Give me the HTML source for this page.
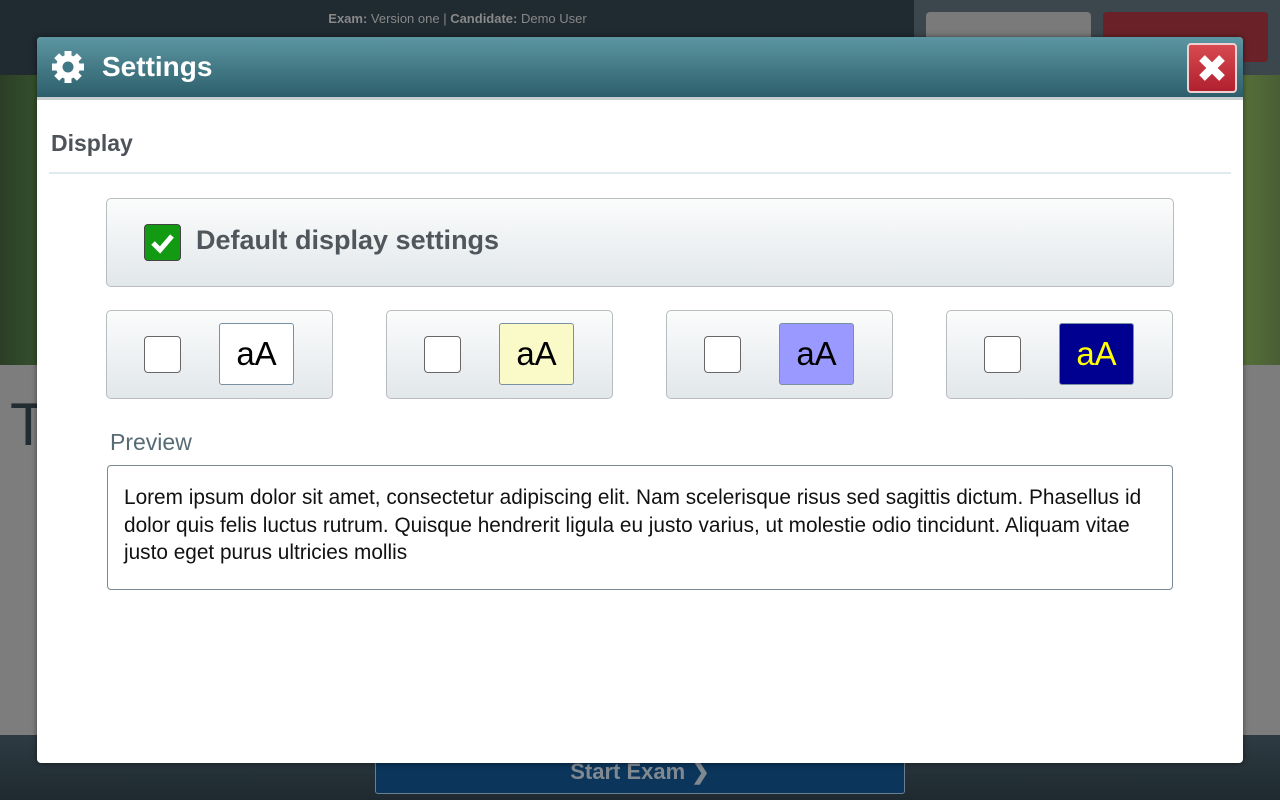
<!DOCTYPE html>
<html><head><meta charset="utf-8"><style>
*{box-sizing:border-box;margin:0;padding:0}
body{width:1280px;height:800px;overflow:hidden;position:relative;font-family:"Liberation Sans",sans-serif;background:#7d7d7d}
.top{position:absolute;left:0;top:0;width:1280px;height:75px;background:#1f2a31}
.top .r{position:absolute;left:914px;top:0;width:366px;height:75px;background:#3b464d}
.img{position:absolute;left:0;top:75px;width:1280px;height:290px;background:linear-gradient(90deg,#2c3e26,#34502c 3%,#5a6a55 6%,#707870 12%,#7a7f78 90%,#56703a 97%,#4a5e34)}
.bot{position:absolute;left:0;top:735px;width:1280px;height:65px;background:linear-gradient(#2e3b42,#1e2a30)}
.startbtn{position:absolute;left:375px;top:740px;width:530px;height:54px;background:#0b355a;border:1px solid #6a8090;border-radius:3px;color:#808890;font-weight:bold;font-size:22px;text-align:center;padding-top:18px}
.hdrtxt{position:absolute;left:0;width:915px;top:11px;text-align:center;color:#888;font-size:13px}
.btn{position:absolute;top:12px;height:50px;border-radius:4px}
.modal{position:absolute;left:37px;top:37px;width:1206px;height:726px;background:#fff;border-radius:4px;box-shadow:0 0 6px rgba(0,0,0,.5);overflow:hidden}
.mh{height:63px;background:linear-gradient(#5c96a2,#2c5f6b);border-bottom:3px solid #c8cfd2;position:relative}
.mh h1{position:absolute;left:65px;top:14px;color:#fff;font-size:28px;font-weight:bold}
.close{position:absolute;left:1150px;top:6px;width:50px;height:50px;background:linear-gradient(#d84a50,#b0202e);border:2px solid #f0d0d0;border-radius:4px}
.disp{position:absolute;left:14px;top:93px;font-size:23px;font-weight:bold;color:#4d5358}
.hr{position:absolute;left:12px;top:135px;width:1182px;height:2px;background:#e0eaee}
.panel{position:absolute;background:linear-gradient(#fbfcfc,#e2e7ea);border:1px solid #b8bcbe;border-radius:5px}
.cb{position:absolute;width:37px;height:37px;border:1px solid #666;border-radius:4px;background:#fff}
.sw{position:absolute;left:112px;top:12px;width:75px;height:62px;border:1px solid #7890a0;border-radius:3px;font-size:33px;text-align:center;line-height:60px}
.prev{position:absolute;left:73px;top:392px;color:#586a74;font-size:23px}
.pbox{position:absolute;left:70px;top:428px;width:1066px;height:125px;border:1px solid #7a8a94;border-radius:4px;padding:18px 16px;font-size:20.8px;line-height:27.5px;color:#111;white-space:nowrap}
</style></head><body>
<div class="top"><div class="r"></div></div>
<div class="hdrtxt"><b>Exam:</b> Version one | <b>Candidate:</b> Demo User</div>
<div class="btn" style="left:926px;width:165px;background:#7a7a7a"></div>
<div class="btn" style="left:1103px;width:165px;background:#6a2228"></div>
<div class="img"></div>
<div style="position:absolute;left:10px;top:390px;font-size:60px;color:#222c33">T</div>
<div class="bot"></div>
<div class="startbtn">Start Exam ❯</div>
<div class="modal">
 <div class="mh">
  <svg style="position:absolute;left:13px;top:12px" width="36" height="36" viewBox="0 0 36 36"><g fill="#fff"><circle cx="18" cy="18" r="12"/><g id="t"><rect x="14.5" y="2" width="7" height="8"/></g><use href="#t" transform="rotate(45 18 18)"/><use href="#t" transform="rotate(90 18 18)"/><use href="#t" transform="rotate(135 18 18)"/><use href="#t" transform="rotate(180 18 18)"/><use href="#t" transform="rotate(225 18 18)"/><use href="#t" transform="rotate(270 18 18)"/><use href="#t" transform="rotate(315 18 18)"/></g><circle cx="18" cy="18" r="5.5" fill="#3f7884"/></svg>
  <h1>Settings</h1>
  <div class="close"><svg width="46" height="46" viewBox="0 0 46 46"><path d="M13 13L33 33M33 13L13 33" stroke="#fff" stroke-width="8"/></svg></div>
 </div>
 <div class="disp">Display</div>
 <div class="hr"></div>
 <div class="panel" style="left:69px;top:161px;width:1068px;height:89px">
  <div class="cb" style="left:37px;top:25px;background:#129a12;border-color:#444"><svg width="35" height="35" viewBox="0 0 35 35"><path d="M8 18l7 7 12-14" stroke="#fff" stroke-width="5" fill="none"/></svg></div>
  <div style="position:absolute;left:89px;top:26px;font-size:27px;font-weight:bold;color:#50575c">Default display settings</div>
 </div>
 <div class="panel" style="left:69px;top:273px;width:227px;height:89px"><div class="cb" style="left:37px;top:25px"></div><div class="sw" style="background:#fff">aA</div></div>
 <div class="panel" style="left:349px;top:273px;width:227px;height:89px"><div class="cb" style="left:37px;top:25px"></div><div class="sw" style="background:#fafac8">aA</div></div>
 <div class="panel" style="left:629px;top:273px;width:227px;height:89px"><div class="cb" style="left:37px;top:25px"></div><div class="sw" style="background:#9999ff">aA</div></div>
 <div class="panel" style="left:909px;top:273px;width:227px;height:89px"><div class="cb" style="left:37px;top:25px"></div><div class="sw" style="background:#000090;color:#ffff00">aA</div></div>
 <div class="prev">Preview</div>
 <div class="pbox">Lorem ipsum dolor sit amet, consectetur adipiscing elit. Nam scelerisque risus sed sagittis dictum. Phasellus id<br>dolor quis felis luctus rutrum. Quisque hendrerit ligula eu justo varius, ut molestie odio tincidunt. Aliquam vitae<br>justo eget purus ultricies mollis</div>
</div>
</body></html>
